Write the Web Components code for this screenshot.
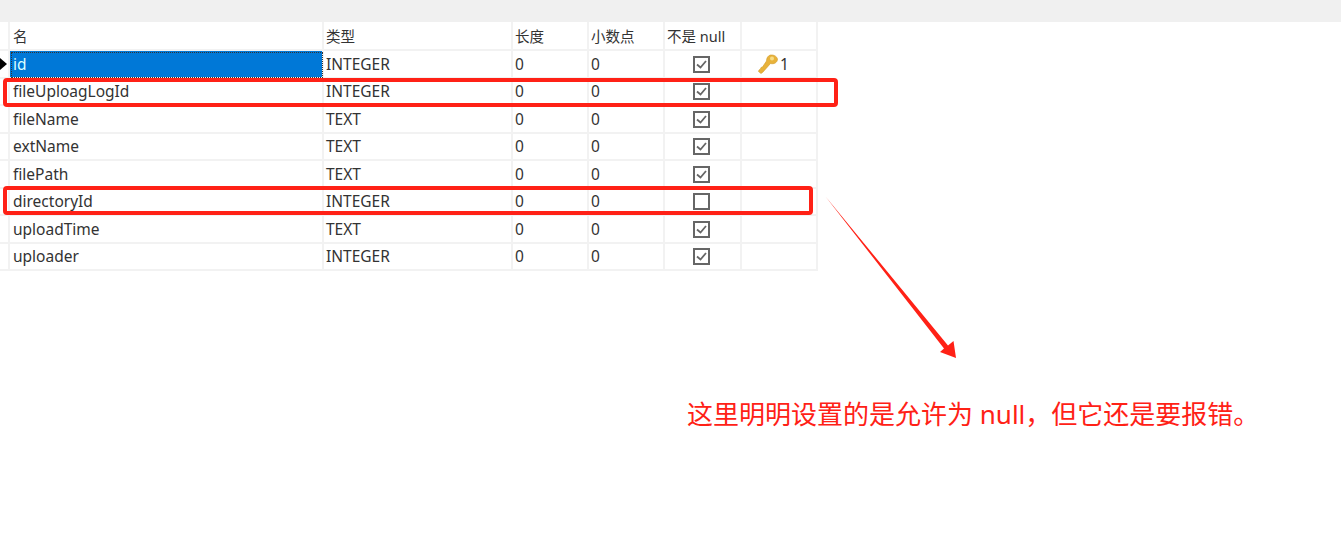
<!DOCTYPE html>
<html lang="zh"><head><meta charset="utf-8"><title>表结构</title>
<style>
html,body{margin:0;padding:0;background:#fff}
body{width:1341px;height:541px;overflow:hidden;position:relative;font-family:"Noto Sans","Noto Sans CJK SC",sans-serif}
</style></head><body>
<app-toolbar></app-toolbar>
<field-table></field-table>
<red-box style="left:3px;top:78px;width:835px;height:29px"></red-box>
<red-box style="left:3px;top:186px;width:810px;height:29px"></red-box>
<red-arrow></red-arrow>
<red-note>这里明明设置的是允许为 null，但它还是要报错。</red-note>
<script>
function def(name, html, init){
  customElements.define(name, class extends HTMLElement{
    constructor(){super();this.attachShadow({mode:'open'}).innerHTML=html;}
    connectedCallback(){ if(init) init(this); }
  });
}
def('app-toolbar','<style>:host{display:block;height:22px;background:#f0f0f0}</style>');
def('red-box','<style>:host{display:block;position:absolute;box-sizing:border-box;border:4px solid #ff2116;border-radius:4px}</style>');
def('red-arrow',`<style>:host{display:block;position:absolute;left:820px;top:190px;width:145px;height:175px}svg{display:block}</style>
<svg width="145" height="175" viewBox="0 0 145 175"><path d="M5.500 6.500 L128 155.400 L133.500 151 L136 168 L120 162 L124 158.600 Z" fill="#ff2116"/></svg>`);
def('red-note','<style>:host{display:block;position:absolute;left:687px;top:397px;font:26px/34px "Noto Sans","Noto Sans CJK SC",sans-serif;color:#ff2116;white-space:nowrap}</style><slot></slot>');
def('check-box',`<style>:host{display:inline-block;width:17px;height:17px;box-sizing:border-box;border:2px solid #666;background:#fff;margin-right:2px}svg{display:block}</style>
<svg width="13" height="13" viewBox="0 0 13 13"><path d="M2 6.500 L5.500 9.500 L11 3" fill="none" stroke="#666" stroke-width="1.800"/></svg>`,
  el=>{ if(el.hasAttribute('off')) el.shadowRoot.querySelector('svg').style.display='none'; });
def('key-icon',`<style>:host{display:inline-block;width:22px;height:22px}svg{display:block}</style>
<svg width="22" height="22" viewBox="0 0 22 22"><path d="M13.500 2 C17 1.500 20 3.500 20.500 6 C20.500 9.500 17 11.500 13.500 10.500 L6 19 L4 20.500 L1.500 18.500 L2 17 L3.500 16 L4 14.500 L5.500 14 L9.500 8 C9.500 5 11 2.500 13.500 2 Z" fill="#e8b23a" stroke="#d09a28" stroke-width=".6"/><circle cx="15" cy="5.500" r="2" fill="#f7dc86"/></svg>`);
const rows=[['id','INTEGER',1,1],['fileUploagLogId','INTEGER',1],['fileName','TEXT',1],['extName','TEXT',1],['filePath','TEXT',1],['directoryId','INTEGER',0],['uploadTime','TEXT',1],['uploader','INTEGER',1]];
const cell=(c,t='')=>`<div class="c ${c}">${t}</div>`;
let body=`<div class="c g"></div>`+cell('h n','名')+cell('h','类型')+cell('h','长度')+cell('h','小数点')+cell('h','不是 null')+cell('h');
rows.forEach((r,i)=>{
  body+=`<div class="c g">${i==0?'<i></i>':''}</div>`+cell(i==0?'n sel':'n',r[0])+cell('',r[1])+cell('','0')+cell('','0')
   +cell('m',r[2]?'<check-box></check-box>':'<check-box off></check-box>')+cell('k',r[3]?'<key-icon></key-icon><b>1</b>':'');
});
def('field-table',`<style>
:host{display:block;width:818px;font:15.500px/1 "Noto Sans","Noto Sans CJK SC",sans-serif;color:#333}
.t{display:grid;grid-template-columns:10px 314px 189px 76px 76px 77px 76px;grid-template-rows:29px repeat(8,27.500px)}
.c{box-sizing:border-box;border-right:2px solid #f2f2f2;border-bottom:2px solid #f2f2f2;display:flex;align-items:center;padding:1px 0 0 2px;white-space:nowrap;overflow:hidden;background:#fff}
.n{padding-left:3px}
.h{font-size:14.500px}
.g{padding:0;position:relative;overflow:visible}
.g i{position:absolute;left:0;top:7px;border-left:7px solid #000;border-top:6px solid transparent;border-bottom:6px solid transparent}
.m{justify-content:center;padding:1px 0 0}
.k{padding-left:15px;gap:1px}
.k b{font-weight:400}
.sel{background:#0078d7;color:#dff;outline:1px dotted #333;outline-offset:-2px}
</style><div class="t">${body}</div>`);
</script>
</body></html>
